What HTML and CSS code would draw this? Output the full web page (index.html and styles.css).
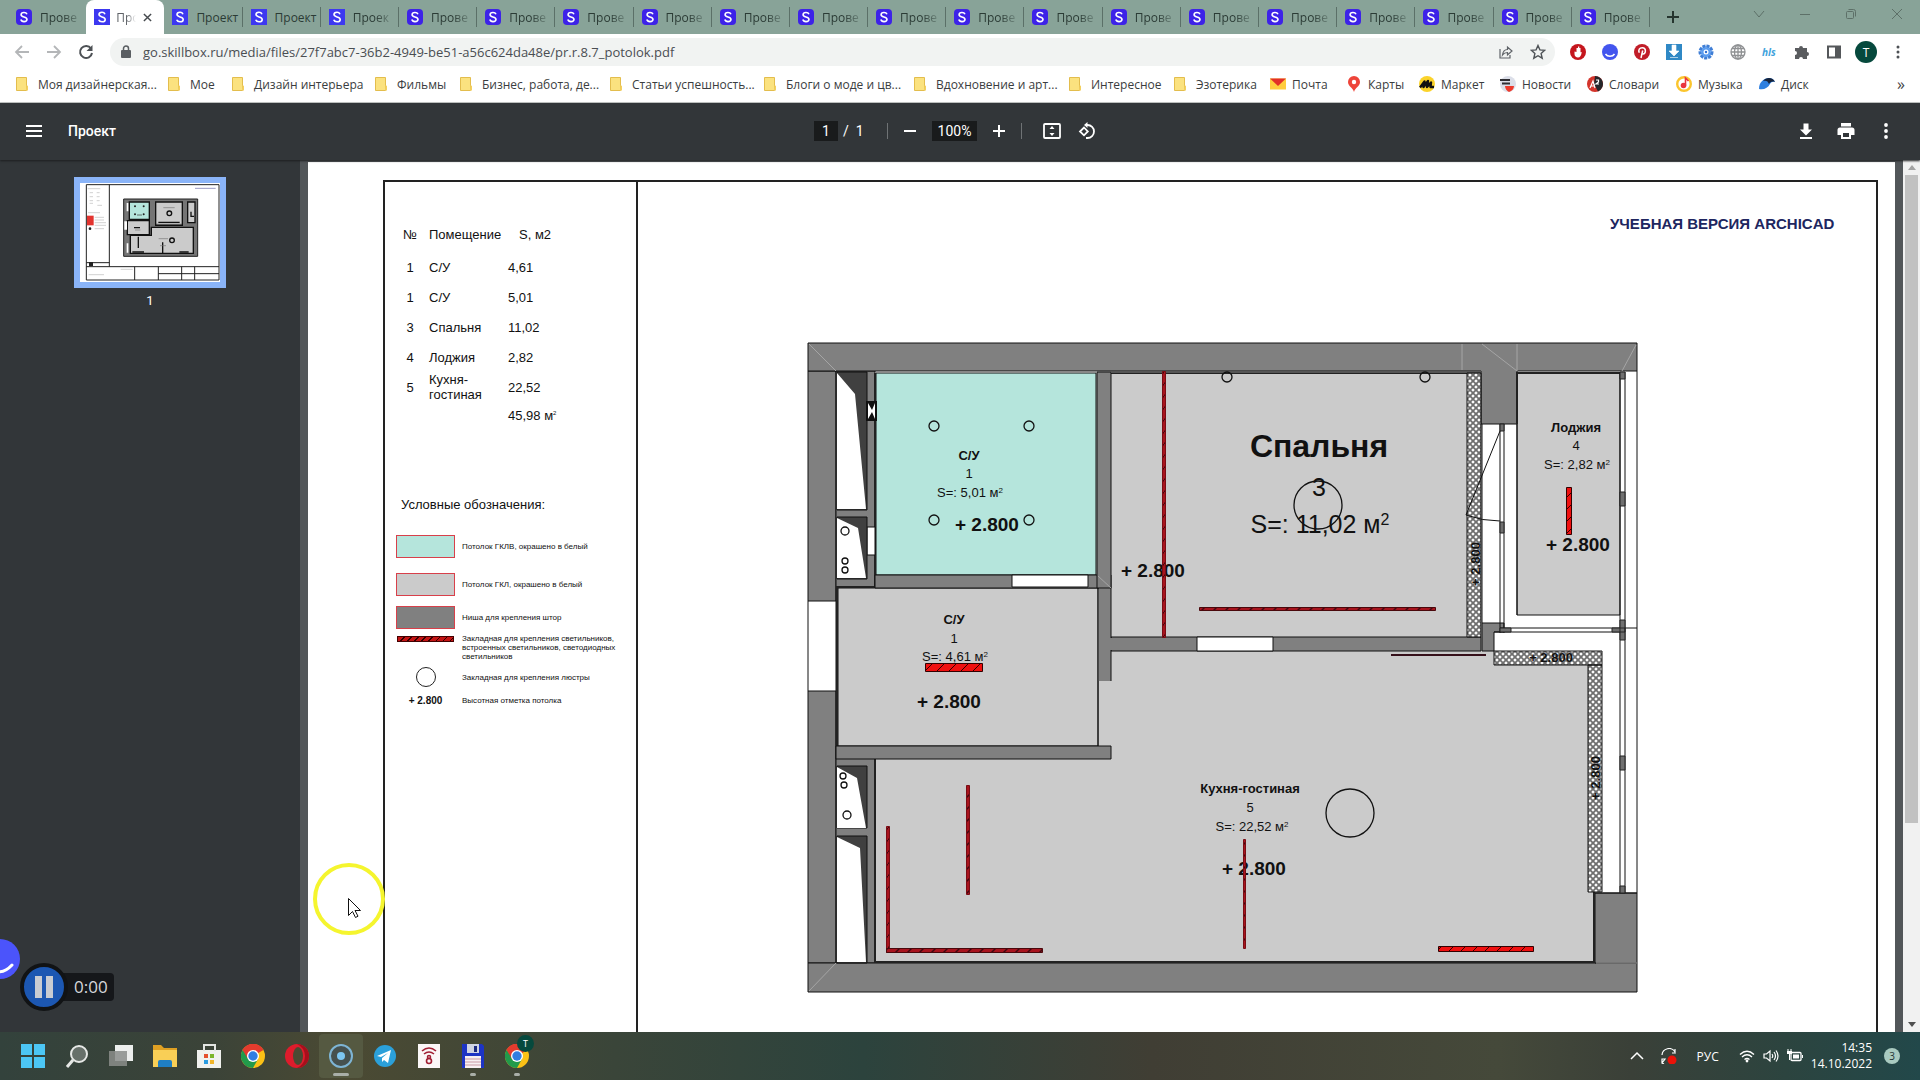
FILE: index.html
```html
<!DOCTYPE html>
<html lang="ru">
<head>
    <meta charset="UTF-8">
    <meta name="viewport" content="width=device-width, initial-scale=1.0">
    <title>Проект</title>
    <link rel="stylesheet" href="styles.css">
</head>
<body>
    <!-- shared icons -->
    <svg class="defs" aria-hidden="true">
        <symbol id="fav" viewBox="0 0 16 16">
            <rect width="16" height="16" rx="4" fill="#3d22e8"/>
            <path d="M11 5.2C10.500 4 9.300 3.500 8 3.500c-1.700 0-2.900.9-2.900 2.200C5.100 8.600 11 7.200 11 10.300c0 1.400-1.300 2.300-3 2.300-1.500 0-2.800-.7-3.200-2" fill="none" stroke="#fff" stroke-width="1.600"/>
        </symbol>
        <symbol id="fav-sq" viewBox="0 0 16 16">
            <rect width="16" height="16" fill="#3d38f0"/>
            <path d="M11 5.200C10.500 4 9.300 3.300 8 3.300c-1.700 0-3 .9-3 2.300C5 8.600 11.200 7.200 11.200 10.400c0 1.400-1.400 2.400-3.200 2.400-1.500 0-2.800-.7-3.300-2" fill="none" stroke="#fff" stroke-width="1.600"/>
        </symbol>
        <symbol id="folder" viewBox="0 0 16 16">
            <path d="M0.500 1.500h10v13h-10z" fill="#fbe27f" stroke="#e3bd4d"/>
            <path d="M10.500 9l1.500 1v4.500h-2z" fill="#f3d060"/>
        </symbol>
        <symbol id="chrome" viewBox="0 0 24 24">
            <circle cx="12" cy="12" r="12" fill="#fbc116"/>
            <path d="M12 12L1.600 6A12 12 0 0 1 22.400 6z" fill="#e33b2e"/>
            <path d="M12 12L1.600 6A12 12 0 0 0 12 24l5-9z" fill="#229a4b"/>
            <path d="M12 6h10.400A12 12 0 0 0 1.600 6L7 15z" fill="#e33b2e"/>
            <circle cx="12" cy="12" r="6" fill="#fff"/>
            <circle cx="12" cy="12" r="4.700" fill="#2f7de1"/>
        </symbol>
    </svg>

    <header class="browser">
        <div class="tabstrip">
            <nav class="tabs">
                <button class="tab"><svg><use href="#fav"/></svg><span>Прове</span></button>
                <button class="tab active"><svg><use href="#fav-sq"/></svg><span>Про</span><svg class="close" viewBox="0 0 10 10"><path d="M1 1l8 8M9 1l-8 8" stroke="#45494d" stroke-width="1.600"/></svg></button>
                <button class="tab full"><svg><use href="#fav-sq"/></svg><span>Проект</span></button>
                <button class="tab full"><svg><use href="#fav-sq"/></svg><span>Проект</span></button>
                <button class="tab"><svg><use href="#fav-sq"/></svg><span>Проек</span></button>
                <button class="tab"><svg><use href="#fav"/></svg><span>Прове</span></button>
                <button class="tab"><svg><use href="#fav"/></svg><span>Прове</span></button>
                <button class="tab"><svg><use href="#fav"/></svg><span>Прове</span></button>
                <button class="tab"><svg><use href="#fav"/></svg><span>Прове</span></button>
                <button class="tab"><svg><use href="#fav"/></svg><span>Прове</span></button>
                <button class="tab"><svg><use href="#fav"/></svg><span>Прове</span></button>
                <button class="tab"><svg><use href="#fav"/></svg><span>Прове</span></button>
                <button class="tab"><svg><use href="#fav"/></svg><span>Прове</span></button>
                <button class="tab"><svg><use href="#fav"/></svg><span>Прове</span></button>
                <button class="tab"><svg><use href="#fav"/></svg><span>Прове</span></button>
                <button class="tab"><svg><use href="#fav"/></svg><span>Прове</span></button>
                <button class="tab"><svg><use href="#fav"/></svg><span>Прове</span></button>
                <button class="tab"><svg><use href="#fav"/></svg><span>Прове</span></button>
                <button class="tab"><svg><use href="#fav"/></svg><span>Прове</span></button>
                <button class="tab"><svg><use href="#fav"/></svg><span>Прове</span></button>
                <button class="tab"><svg><use href="#fav"/></svg><span>Прове</span></button>
            </nav>
            <button class="new-tab" aria-label="Новая вкладка"><svg viewBox="0 0 12 12"><path d="M6 0v12M0 6h12" stroke="#26352f" stroke-width="2"/></svg></button>
            <div class="window-buttons">
                <button aria-label="Поиск вкладок"><svg viewBox="0 0 12 12"><path d="M1 3l5 6 5-6" fill="none" stroke="#5d7068"/></svg></button>
                <button aria-label="Свернуть"><svg viewBox="0 0 12 12"><path d="M1 6.500h10" stroke="#5d7068"/></svg></button>
                <button aria-label="Развернуть"><svg viewBox="0 0 12 12"><rect x="1.500" y="3.500" width="7" height="7" rx="1" fill="none" stroke="#5d7068"/><path d="M3.500 1.500h5a2 2 0 0 1 2 2v5" fill="none" stroke="#5d7068"/></svg></button>
                <button aria-label="Закрыть"><svg viewBox="0 0 12 12"><path d="M1 1l10 10M11 1L1 11" stroke="#5d7068"/></svg></button>
            </div>
        </div>

        <div class="address-row">
            <div class="nav-buttons">
                <button aria-label="Назад"><svg viewBox="0 0 16 16"><path d="M15 8H2M8 2L2 8l6 6" fill="none" stroke="#b4b6b8" stroke-width="1.800"/></svg></button>
                <button aria-label="Вперёд"><svg viewBox="0 0 16 16"><path d="M1 8h13M8 2l6 6-6 6" fill="none" stroke="#b4b6b8" stroke-width="1.800"/></svg></button>
                <button aria-label="Обновить"><svg viewBox="0 0 16 16"><path d="M13 4.500A6 6 0 1 0 14 9" fill="none" stroke="#4d5155" stroke-width="2"/><path d="M14.500 1v6h-6z" fill="#4d5155"/></svg></button>
            </div>
            <label class="omnibox">
                <svg class="lock" viewBox="0 0 10 14"><rect y="5" width="10" height="8" rx="1" fill="#5a5e62"/><path d="M2.500 6V3.500a2.500 2.500 0 0 1 5 0V6" fill="none" stroke="#5a5e62" stroke-width="1.500"/></svg>
                <input type="text" aria-label="Адрес" value="go.skillbox.ru/media/files/27f7abc7-36b2-4949-be51-a56c624da48e/pr.r.8.7_potolok.pdf">
                <svg viewBox="0 0 16 16"><path d="M2 5v9h10v-3M4.500 11c.5-4 2.500-5.500 5-5.500V3L14 7l-4.500 4V8.500c-2 0-3.500.5-5 2.500z" fill="none" stroke="#5f6368" stroke-width="1.200"/></svg>
                <svg viewBox="0 0 16 16"><path d="M8 1.500l1.900 4.400 4.800.4-3.600 3.200 1.100 4.700L8 11.700l-4.200 2.500 1.100-4.700L1.300 6.300l4.800-.4z" fill="none" stroke="#4f5357" stroke-width="1.400"/></svg>
            </label>
            <div class="extensions">
                <svg viewBox="0 0 16 16"><circle cx="8" cy="8" r="8" fill="#c5161d"/><path d="M4.500 7.500V10c0 2.300 1.500 3.500 3.500 3.500s3.500-2 3.700-5.500l-1.200.3V4H9.300V2.500H8V4H6.500v4z" fill="#fff"/></svg>
                <svg viewBox="0 0 16 16"><circle cx="8" cy="8" r="8" fill="#4355ee"/><path d="M3.500 10c2 3 7 3 9 0" fill="none" stroke="#fff" stroke-width="1.500"/></svg>
                <svg viewBox="0 0 16 16"><circle cx="8" cy="8" r="8" fill="#c11d28"/><path d="M7 14l1.700-7.500M5.300 8.800C4 6 5.500 3.700 8.300 3.700c4.300 0 3.700 6.300.8 6.300-1 0-1.500-.8-1.500-.8" fill="none" stroke="#fff" stroke-width="1.500"/></svg>
                <svg viewBox="0 0 16 16"><rect width="16" height="16" fill="#2f88c5"/><path d="M6 1h4v6h3l-5 5-5-5h3zM4 13.500h8" fill="#fff" stroke="#fff" stroke-width=".6"/></svg>
                <svg viewBox="0 0 16 16"><circle cx="8" cy="8" r="6" fill="#8dbdf5" stroke="#3f7ed6" stroke-width="3" stroke-dasharray="3 1"/><circle cx="8" cy="8" r="4.500" fill="#5a9cf0"/><circle cx="8" cy="8" r="2.500" fill="#fff"/><circle cx="8" cy="8" r="1.200" fill="#2f6ed0"/></svg>
                <svg viewBox="0 0 16 16" fill="none" stroke="#8f9193" stroke-width="1.300"><circle cx="8" cy="8" r="7"/><ellipse cx="8" cy="8" rx="3.500" ry="7"/><path d="M8 1v14M1 8h14M2 4.500h12M2 11.500h12"/></svg>
                <span class="hls">hls</span>
                <svg viewBox="0 0 16 16"><path d="M1 4h4a2 2 0 1 1 4 0h4v4a2 2 0 1 1 0 4v3H9a2 2 0 0 0-4 0H1v-4a2 2 0 0 0 0-4z" fill="#5a5c5f"/></svg>
                <svg viewBox="0 0 16 16"><path d="M1 1.500h14v13H1z" fill="#54575a"/><path d="M3 3.500h6v9H3z" fill="#fff"/></svg>
                <button class="avatar">T</button>
                <svg viewBox="0 0 16 16" fill="#4d5155"><circle cx="8" cy="3" r="1.500"/><circle cx="8" cy="8" r="1.500"/><circle cx="8" cy="13" r="1.500"/></svg>
            </div>
        </div>

        <nav class="bookmarks">
            <a href="#"><svg><use href="#folder"/></svg>Моя дизайнерская...</a>
            <a href="#"><svg><use href="#folder"/></svg>Мое</a>
            <a href="#"><svg><use href="#folder"/></svg>Дизайн интерьера</a>
            <a href="#"><svg><use href="#folder"/></svg>Фильмы</a>
            <a href="#"><svg><use href="#folder"/></svg>Бизнес, работа, де...</a>
            <a href="#"><svg><use href="#folder"/></svg>Статьи успешность...</a>
            <a href="#"><svg><use href="#folder"/></svg>Блоги о моде и цв...</a>
            <a href="#"><svg><use href="#folder"/></svg>Вдохновение и арт...</a>
            <a href="#"><svg><use href="#folder"/></svg>Интересное</a>
            <a href="#"><svg><use href="#folder"/></svg>Эзотерика</a>
            <a href="#"><svg viewBox="0 0 16 16"><path d="M0 2.500h16v11H0z" fill="#ffcc3d"/><path d="M0 2.500h16L8 10z" fill="#e22f28"/></svg>Почта</a>
            <a href="#"><svg viewBox="0 0 16 16"><path d="M8 16C7 11.500 2 10.500 2 6a6 6 0 0 1 12 0c0 4.500-5 5.500-6 10z" fill="#ee4439"/><circle cx="8" cy="6" r="2.200" fill="#fff"/></svg>Карты</a>
            <a href="#"><svg viewBox="0 0 16 16"><circle cx="8" cy="8" r="8" fill="#fbd32a"/><path d="M1 11.500l4.500-6-1 5.500 4.500-6-1 6 4-4.500-.5 4.500H15" fill="none" stroke="#111" stroke-width="2.400" stroke-linejoin="round"/></svg>Маркет</a>
            <a href="#"><svg viewBox="0 0 16 16"><circle cx="8" cy="8" r="8" fill="#dcdfe9"/><path d="M5 10h9c0 3-2 5-5 6-2-1-4-3-4-6z" fill="#ed3b2d"/><path d="M0 4h10M2 7.500h8" stroke="#2f2d33" stroke-width="1.800"/></svg>Новости</a>
            <a href="#"><svg viewBox="0 0 16 16"><circle cx="8" cy="8" r="8" fill="#d4342b"/><path d="M8 0a8 8 0 0 1 3 15.400L7 8z" fill="#25262b"/><path d="M3 12l3-7 2 7M4 10h3M9 4h2.500v2L9 8h3" fill="none" stroke="#fff" stroke-width="1.200"/></svg>Словари</a>
            <a href="#"><svg viewBox="0 0 16 16"><circle cx="8" cy="8" r="6.800" fill="#fff" stroke="#fbc52d" stroke-width="2.400"/><circle cx="7.500" cy="9.500" r="2.800" fill="#e9353f"/><path d="M9.500 9.500V2l3 3" fill="none" stroke="#e9353f" stroke-width="1.600"/></svg>Музыка</a>
            <a href="#"><svg viewBox="0 0 16 16"><path d="M0 13C0 6 5 2 10 2c3 0 5 1.500 6 4-2-.8-4 0-5 2-2 4-6 6-11 5z" fill="#2d7fe0"/><path d="M4 5c3-4 10-4 12 1-3-1-5 0-6 2-1-3-3-4-6-3z" fill="#16233a"/></svg>Диск</a>
            <button class="more" aria-label="Другие закладки">»</button>
        </nav>
    </header>

    <div class="pdf-bar">
        <div class="pdf-left">
            <button aria-label="Меню"><svg viewBox="0 0 18 18"><path d="M1 4h16M1 9h16M1 14h16" stroke="#fff" stroke-width="2"/></svg></button>
            <span class="pdf-title">Проект</span>
        </div>
        <div class="pdf-center">
            <input class="page-no" type="text" aria-label="Страница" value="1">
            <span class="page-total">/&nbsp; 1</span>
            <i class="divider"></i>
            <button aria-label="Уменьшить"><svg viewBox="0 0 18 18"><path d="M3 9h12" stroke="#fff" stroke-width="2"/></svg></button>
            <input class="zoom" type="text" aria-label="Масштаб" value="100%">
            <button aria-label="Увеличить"><svg viewBox="0 0 18 18"><path d="M3 9h12M9 3v12" stroke="#fff" stroke-width="2"/></svg></button>
            <i class="divider"></i>
            <div class="fit">
                <button aria-label="По размеру страницы"><svg viewBox="0 0 18 18"><rect x="1" y="2" width="16" height="14" rx="1" fill="none" stroke="#fff" stroke-width="1.800"/><path d="M9 4l2.500 3h-5zM9 14l2.500-3h-5z" fill="#fff"/></svg></button>
                <button aria-label="Повернуть"><svg viewBox="0 0 18 18"><path d="M6 5.500l3.800 4L6 13.300l-4-3.800zM8 3h1.500a6.500 6.500 0 0 1 0 13H8" fill="none" stroke="#fff" stroke-width="1.800"/><path d="M9.500 0v6L6 3z" fill="#fff"/></svg></button>
            </div>
        </div>
        <div class="pdf-right">
            <button aria-label="Скачать"><svg viewBox="0 0 18 18"><path d="M6.500 1.500h5v6H15l-6 6-6-6h3.500zM3 15h12v2H3z" fill="#fff"/></svg></button>
            <button aria-label="Печать"><svg viewBox="0 0 18 18"><path d="M4 1h10v3.500H4zM3 5.500h12a2.500 2.500 0 0 1 2.500 2.500v5H14v4H4v-4H.5V8A2.500 2.500 0 0 1 3 5.500zM6 11v4h6v-4z" fill="#fff" fill-rule="evenodd"/></svg></button>
            <button aria-label="Ещё"><svg viewBox="0 0 18 18" fill="#fff"><circle cx="9" cy="3" r="1.900"/><circle cx="9" cy="9" r="1.900"/><circle cx="9" cy="15" r="1.900"/></svg></button>
        </div>
    </div>

    <main class="viewer">
        <aside class="sidebar">
            <button class="thumb" aria-label="Страница 1">
                <svg viewBox="240 99 420 297">
                    <path d="M240 99h420v297H240z" fill="#fff"/>
                    <g fill="none" stroke="#222" stroke-width="3">
                        <path d="M259 104h398v286H259zM328 104v246M259 338h69M259 350h398M404 350v40M475 350v40M475 371h182M545 350v40M584 350v40"/>
                    </g>
                    <path d="M371 147h222v172H371z" fill="#757575" stroke="#222" stroke-width="3"/>
                    <path d="M388 156h60v52h-60z" fill="#b5e5dc"/>
                    <path d="M467 156h80v65h-80zM563 156h22v62h-22zM382 212h66v42h-66zM454 232h126v78H391v-54h63z" fill="#cbcbcb"/>
                    <path d="M388 156h60v52h-60zM467 156h80v70h-80zM563 156h22v62h-22zM382 212h66v42h-66zM391 310h189v-78H454v24h-63z" fill="none" stroke="#111" stroke-width="4"/>
                    <path d="M373 214h8v25h-8zM380 159h5v25h-5zM380 280h5v28h-5z" fill="#fff"/>
                    <path d="M415 260v34M488 277v32M402 233h18M475 217h64M397 306h35M538 306h28M573 185v14h9" fill="none" stroke="#111" stroke-width="4"/>
                    <path d="M411 195h15" stroke="#333" stroke-width="2"/>
                    <circle cx="508" cy="190" r="7" fill="none" stroke="#111" stroke-width="4"/><circle cx="516" cy="271" r="7" fill="none" stroke="#111" stroke-width="4"/>
                    <g fill="#222"><circle cx="405" cy="169" r="3"/><circle cx="431" cy="169" r="3"/><circle cx="405" cy="193" r="3"/><circle cx="431" cy="193" r="3"/><circle cx="270" cy="236" r="4"/><path d="M267 336h12v12h-12z"/></g>
                    <path d="M261 197h20v29h-20z" fill="#e3342f"/>
                    <path d="M263 116h38M269 128h10M290 128h9M269 140h10M290 140h9M269 152h10M290 152h9M269 160h10M292 166h14M264 188h36M284 202h28M284 210h28M284 218h34M284 226h34M284 236h28M362 358h36M266 374h46" stroke="#bbb" stroke-width="2"/>
                    <path d="M585 115h62" stroke="#9a9ac4" stroke-width="3"/>
                    <path d="M476 266h28M480 287h18M490 173h34M405 240h16" stroke="#777" stroke-width="2"/>
                </svg>
            </button>
            <span class="thumb-label">1</span>
        </aside>

        <div class="canvas">
            <article class="sheet">
                <div class="frame">
                    <section class="notes">
                        <table class="rooms">
                            <thead>
                                <tr><th>№</th><th>Помещение</th><th>S, м2</th></tr>
                            </thead>
                            <tbody>
                                <tr><td>1</td><td>С/У</td><td>4,61</td></tr>
                                <tr><td>1</td><td>С/У</td><td>5,01</td></tr>
                                <tr><td>3</td><td>Спальня</td><td>11,02</td></tr>
                                <tr><td>4</td><td>Лоджия</td><td>2,82</td></tr>
                                <tr><td>5</td><td>Кухня-гостиная</td><td>22,52</td></tr>
                            </tbody>
                            <tfoot>
                                <tr><td></td><td></td><td>45,98 м<sup>2</sup></td></tr>
                            </tfoot>
                        </table>
                        <h2>Условные обозначения:</h2>
                        <dl class="legend">
                            <dt><i class="swatch mint"></i></dt><dd>Потолок ГКЛВ, окрашено в белый</dd>
                            <dt><i class="swatch light"></i></dt><dd>Потолок ГКЛ, окрашено в белый</dd>
                            <dt><i class="swatch dark"></i></dt><dd>Ниша для крепления штор</dd>
                            <dt class="top"><i class="swatch strip"></i></dt><dd class="top">Закладная для крепления светильников, встроенных светильников, светодиодных светильников</dd>
                            <dt><i class="swatch ring"></i></dt><dd>Закладная для крепления люстры</dd>
                            <dt class="mark">+ 2.800</dt><dd>Высотная отметка потолка</dd>
                        </dl>
                    </section>

                    <svg class="plan" viewBox="638 182 1238 850">
                        <defs>
                            <pattern id="red" width="12" height="12" patternUnits="userSpaceOnUse">
                                <path d="M0 0h12v12H0z" fill="#f01010"/>
                                <path d="M-1 13L13-1" stroke="#300" stroke-width="1"/>
                            </pattern>
                            <pattern id="darkred" width="12" height="12" patternUnits="userSpaceOnUse">
                                <path d="M0 0h12v12H0z" fill="#a8141e"/>
                                <path d="M-1 13L13-1" stroke="#400810" stroke-width="1.500"/>
                            </pattern>
                            <pattern id="cross" width="6" height="6" patternUnits="userSpaceOnUse">
                                <path d="M0 0h6v6H0z" fill="#fff"/>
                                <path d="M0 0l6 6M6 0L0 6" stroke="#6f6f6f" stroke-width="1.800"/>
                            </pattern>
                        </defs>

                        <text class="stamp" x="1610" y="229">УЧЕБНАЯ ВЕРСИЯ ARCHICAD</text>

                        <!-- outer walls -->
                        <g class="wall">
                            <path d="M808 371h28v230h-28zM808 691h28v272h-28z"/>
                            <path d="M836 371h39v592h-39z"/>
                            <path d="M808 343h829v28h-120v53h-36v-53H808z"/>
                            <path d="M808 963h829v29H808z"/>
                            <path d="M1595 893h42v70h-42z"/>
                        </g>
                        <path class="line" d="M808 601v90M1637 371v522"/>

                        <!-- rooms -->
                        <path class="room" d="M1097 651h504v240h-8v70H876V759h221z"/>
                        <path class="room edge" d="M838 588h260v158H838z"/>
                        <path class="room" d="M1111 373h356v264h-356z"/>
                        <path class="room edge" d="M1517 373h103v242h-103z"/>
                        <path class="mint-room" d="M876 373h220v202H876z"/>
                        <path class="thick" d="M875 373v214H837v159M875 759v203h719v-71M1111 373h370M1517 424v-51h103"/>

                        <!-- partitions -->
                        <g class="wall">
                            <path d="M875 575h236v13H875z"/>
                            <path d="M1097 372h14v216h-14z"/>
                            <path d="M836 746h275v13H836z"/>
                            <path d="M1111 637h370v14h-370z"/>
                            <path d="M1482 623h22v9h-10v19h-12z"/>
                        </g>
                        <path d="M1098 589h13v92h-13z" fill="#808080"/>
                        <path d="M1105 638h12v12h-12z" fill="#808080"/>
                        <path class="line" d="M1098 588v158M1111 588v50M1111 650v31"/>
                        <path class="hole" d="M1012 575h76v12h-76zM1197 637h76v14h-76zM867 527h8v28h-8z"/>
                        <path d="M1111 372h370" stroke="#555" stroke-width="2"/>

                        <!-- ventilation shafts -->
                        <g class="shaft">
                            <path d="M837 372h30v138h-30zM837 517h30v62h-30zM837 766h30v62h-30zM837 836h30v127h-30z"/>
                        </g>
                        <path d="M837 373l18 21 11 115h-29zM837 518l21 10 8 50h-29zM837 767l20 11 9 50h-29zM837 837l23 11 6 114h-29z" fill="#fff"/>
                        <g class="ring">
                            <circle cx="845" cy="531" r="4"/><circle cx="845" cy="561" r="3"/><circle cx="845" cy="570" r="3"/>
                            <circle cx="843" cy="776" r="3"/><circle cx="844" cy="785" r="3"/><circle cx="847" cy="815" r="4"/>
                        </g>
                        <path d="M866 401h11v20h-11z" fill="#111"/>
                        <path d="M868 403l4 7 3-7v16l-3-7-4 7z" fill="#fff"/>

                        <!-- windows and balcony -->
                        <path class="line" d="M1482 424v199M1500 424v209M1504 424v209M1517 424v191"/>
                        <path class="line" d="M1620 372v521M1625 372v521M1500 628h137M1494 632h126M1595 893h42"/>
                        <g class="stub">
                            <path d="M1500 424h4v7h-4zM1500 522h4v11h-4zM1620 372h5v7h-5zM1620 492h5v14h-5zM1620 620h5v20h-5zM1620 756h5v14h-5zM1620 886h5v7h-5zM1500 628h11v4h-11zM1612 628h13v4h-13z"/>
                        </g>
                        <path class="niche" d="M1467 373h14v264h-14zM1494 651h108v14h-108zM1588 665h14v227h-14z"/>
                        <path class="line" d="M1500 431l-34 84q16 6 34 6"/>

                        <!-- wall joints -->
                        <path d="M809 344l27 27M809 991l27-28M1462 344v26M1482 344l35 27M1517 344v27M1636 345l-14 26M1596 963h41M1098 576l13 12" stroke="#a5a5a5" fill="none"/>

                        <!-- chandeliers and spots -->
                        <g class="ring">
                            <circle cx="934" cy="426" r="5"/><circle cx="1029" cy="426" r="5"/>
                            <circle cx="934" cy="520" r="5"/><circle cx="1029" cy="520" r="5"/>
                            <circle cx="1227" cy="377" r="5"/><circle cx="1425" cy="377" r="5"/>
                            <circle cx="1318" cy="505" r="24"/><circle cx="1350" cy="813" r="24"/>
                        </g>

                        <g class="name">
                            <text x="969" y="460">С/У</text>
                            <text x="954" y="624">С/У</text>
                            <text x="1576" y="432">Лоджия</text>
                            <text x="1250" y="793">Кухня-гостиная</text>
                        </g>
                        <g class="area">
                            <text x="969" y="478">1</text>
                            <text x="954" y="643">1</text>
                            <text x="1576" y="450">4</text>
                            <text x="1250" y="812">5</text>
                            <text x="970" y="497">S=: 5,01 м<tspan class="sup" dy="-4">2</tspan></text>
                            <text x="955" y="661">S=: 4,61 м<tspan class="sup" dy="-4">2</tspan></text>
                            <text x="1577" y="469">S=: 2,82 м<tspan class="sup" dy="-4">2</tspan></text>
                            <text x="1252" y="831">S=: 22,52 м<tspan class="sup" dy="-4">2</tspan></text>
                        </g>
                        <text class="big-name" x="1319" y="457">Спальня</text>
                        <g class="big-area">
                            <text x="1319" y="496">3</text>
                            <text x="1320" y="533">S=: 11,02 м<tspan class="big-sup" dy="-8">2</tspan></text>
                        </g>
                        <g class="level">
                            <text x="955" y="531">+ 2.800</text>
                            <text x="917" y="708">+ 2.800</text>
                            <text x="1121" y="577">+ 2.800</text>
                            <text x="1546" y="551">+ 2.800</text>
                            <text x="1222" y="875">+ 2.800</text>
                        </g>
                        <g class="level-small">
                            <text x="1551" y="662">+ 2.800</text>
                            <text transform="translate(1480 564) rotate(-90)">+ 2.800</text>
                            <text transform="translate(1600 778) rotate(-90)">+ 2.800</text>
                        </g>

                        <!-- lamp mounts -->
                        <g stroke="#300" fill="url(#red)">
                            <path d="M925.500 663.500h57v8h-57zM1566.500 487.500h5v47h-5zM1438.500 946.500h95v5h-95z"/>
                        </g>
                        <g stroke="#7a0c14" fill="url(#darkred)">
                            <path d="M1162.500 371.500h3v266h-3zM966.500 785.500h3v109h-3zM886.500 826.500h3v126h-3zM1243.500 839.500h2v109h-2z"/>
                            <path d="M1199.500 607.500h236v3h-236zM886.500 948.500h156v4h-156z" stroke="#4a080c"/>
                        </g>
                        <path d="M1391 655h95" stroke="#35101a" stroke-width="2"/>
                    </svg>
                </div>
            </article>
            <div class="scrollbar">
                <svg viewBox="0 0 17 15"><path d="M5 10l4-5 4 5z" fill="#a3a3a3"/></svg>
                <i class="bar"></i>
                <i class="rest"></i>
                <svg viewBox="0 0 17 15"><path d="M5 5l4 5 4-5z" fill="#4f4f4f"/></svg>
            </div>
        </div>

        <!-- screen recorder widgets -->
        <div class="bubble"><svg viewBox="0 0 40 40"><circle cx="20" cy="20" r="20" fill="#4b54fb"/><path d="M8 27q12 12 24-1" fill="none" stroke="#fff" stroke-width="3" stroke-linecap="round"/></svg></div>
        <div class="recorder">
            <button aria-label="Пауза"><svg viewBox="0 0 48 48"><circle cx="24" cy="24" r="22" fill="#1c57b2" stroke="#111315" stroke-width="4"/><path d="M15 13h7v22h-7zM26 13h7v22h-7z" fill="#c9ccd2"/></svg></button>
            <span>0:00</span>
        </div>
        <svg class="pointer" viewBox="0 0 74 74"><circle cx="37" cy="37" r="34" fill="none" stroke="#f5f52e" stroke-width="4"/><path d="M36.500 36.500v17l4-4 3 6 2.500-1.300-3-5.700h5.500z" fill="#fff" stroke="#111"/></svg>
    </main>

    <footer class="taskbar">
        <div class="apps">
            <button aria-label="Пуск"><svg viewBox="0 0 24 24" fill="#4cc6f5"><path d="M0 0h11v11H0zM13 0h11v11H13zM0 13h11v11H0zM13 13h11v11H13z"/></svg></button>
            <button aria-label="Поиск"><svg viewBox="0 0 24 24"><circle cx="14" cy="10" r="8" fill="#67706a" stroke="#e6e8e6" stroke-width="2"/><path d="M8 16l-6 7" stroke="#e6e8e6" stroke-width="3"/></svg></button>
            <button aria-label="Представление задач"><svg viewBox="0 0 24 24"><path d="M6 1h18v16H6z" fill="#eceeed"/><path d="M0 7h18v15H0z" fill="#8b8d8b" opacity=".85"/></svg></button>
            <button aria-label="Проводник"><svg viewBox="0 0 24 24"><path d="M0 1h8l3 3h13v19H0z" fill="#dfa023"/><path d="M0 6h24v17H0z" fill="#f9cf56"/><path d="M5 23v-5q0-2 2-2h10q2 0 2 2v5z" fill="#1f7fc4"/></svg></button>
            <button aria-label="Магазин"><svg viewBox="0 0 24 24"><path d="M0 6h24v18H0z" fill="#f0f1ee"/><path d="M7 7V1h11v6" fill="none" stroke="#e2e4e1" stroke-width="2"/><path d="M7 10h4v4H7z" fill="#e5502e"/><path d="M13 10h4v4h-4z" fill="#7cb52a"/><path d="M7 16h4v4H7z" fill="#2a9be0"/><path d="M13 16h4v4h-4z" fill="#f0b52a"/></svg></button>
            <button aria-label="Chrome"><svg viewBox="0 0 24 24"><use href="#chrome"/></svg></button>
            <button aria-label="Opera"><svg viewBox="0 0 24 24"><circle cx="12" cy="12" r="12" fill="#de1c2c"/><path d="M12 0a12 12 0 0 1 0 24q8-4 8-12t-8-12z" fill="#a70f1c"/><ellipse cx="13" cy="12" rx="5" ry="9" fill="#4a4a33"/></svg></button>
            <button class="current" aria-label="Запись экрана"><svg viewBox="0 0 24 24"><circle cx="12" cy="12" r="11" fill="#46514f" stroke="#7eb5d5" stroke-width="2"/><circle cx="12" cy="12" r="4" fill="#7cc6f2"/></svg></button>
            <button aria-label="Telegram"><svg viewBox="0 0 24 24"><circle cx="12" cy="12" r="11" fill="#2ba0da"/><path d="M4 12l14-6-3 13-4-3-2 2v-4l6-5-7 4z" fill="#fff"/></svg></button>
            <button aria-label="Запись"><svg viewBox="0 0 24 24"><path d="M1 0h22v24H1z" fill="#fbf7f7"/><g fill="none" stroke="#a11f33" stroke-width="1.600"><path d="M5 7q7-6 14 0M7 10q5-4 10 0"/><circle cx="12" cy="17" r="2.500"/><circle cx="12" cy="13" r="1.500"/></g></svg></button>
            <button class="open" aria-label="Total Commander"><svg viewBox="0 0 24 24"><path d="M1 0h20l2 2v22H1z" fill="#1d34c4"/><path d="M6 0h12v9H6z" fill="#cfd3e2"/><path d="M13 2h3v6h-3z" fill="#1b2a80"/><path d="M4 12h16v12H4z" fill="#f7f0f1"/><path d="M4 15h16M4 18h16M4 21h16" stroke="#c99aa4"/></svg></button>
            <button class="open" aria-label="Chrome, профиль T"><svg viewBox="0 0 24 24"><use href="#chrome"/></svg><b class="profile">T</b></button>
        </div>
        <div class="tray">
            <svg viewBox="0 0 16 16"><path d="M2 11l6-6 6 6" fill="none" stroke="#fff" stroke-width="1.500"/></svg>
            <svg viewBox="0 0 16 16"><path d="M1 7a7 7 0 0 1 13-3V1M14 5h-3M1 15v-4h3l-3 4 2 1" fill="none" stroke="#fff" stroke-width="1.200"/><circle cx="11" cy="12" r="4.500" fill="#ea1208"/></svg>
            <span class="lang">РУС</span>
            <div class="status">
                <svg viewBox="0 0 16 16"><path d="M1 6.500q7-6.500 14 0M3 9q5-4.500 10 0M5.500 11.500q2.500-2 5 0" fill="none" stroke="#fff" stroke-width="1.400"/><circle cx="8" cy="13" r="1.400" fill="#fff"/></svg>
                <svg viewBox="0 0 16 16"><path d="M1 6h2.500L7 3v10l-3.500-3H1zM9 6q1.500 2 0 4M11 4q3 4 0 8M13 2.500q4 5.500 0 11" fill="none" stroke="#fff" stroke-width="1.200"/></svg>
                <svg viewBox="0 0 16 16"><rect x="4" y="4.500" width="10" height="8" rx="1" fill="none" stroke="#fff" stroke-width="1.300"/><path d="M6 6.500h6v4H6zM15 7h1v3h-1zM0 3h5v3H3v6H2V6H0z" fill="#fff"/><path d="M1 1v2M4 1v2" stroke="#fff"/></svg>
            </div>
            <div class="clock"><time>14:35</time><time>14.10.2022</time></div>
            <span class="badge">3</span>
        </div>
    </footer>
</body>
</html>
```

FILE: styles.css
```css
* {
    box-sizing: border-box;
}
body {
    margin: 0;
    height: 100vh;
    display: flex;
    flex-direction: column;
    overflow: hidden;
    font-family: "Open Sans", "Noto Sans", sans-serif;
    font-size: 12px;
    background: #525659;
}
button {
    border: 0;
    padding: 0;
    background: none;
    font: inherit;
    color: inherit;
    display: flex;
    align-items: center;
    justify-content: center;
}
input {
    border: 0;
    padding: 0;
    background: none;
    font: inherit;
    color: inherit;
    min-width: 0;
}
svg {
    display: block;
    flex: none;
}
.defs {
    display: none;
}

/* tab strip */
.browser {
    background: #fff;
    border-bottom: 1px solid #c9cccb;
}
.tabstrip {
    display: flex;
    height: 34px;
    padding-left: 8px;
    background: #88a398;
}
.tabs {
    flex: 1;
    display: grid;
    grid-template-columns: repeat(21, 1fr);
}
.tab {
    min-width: 0;
    padding-left: 8px;
    gap: 8px;
    justify-content: flex-start;
    color: #2b3b35;
}
.tab svg {
    width: 16px;
    height: 16px;
}
.tab span {
    flex: 1;
    min-width: 0;
    overflow: hidden;
    text-align: left;
    white-space: nowrap;
    mask-image: linear-gradient(to right, #000 50%, transparent 95%);
}
.tab:nth-child(n+3):after {
    content: "";
    width: 1px;
    height: 20px;
    margin-left: -8px;
    background: #5b7068;
}
.tab.full span {
    mask-image: none;
}
.tab.active {
    background: #fff;
    border-radius: 8px 8px 0 0;
    color: #5f6368;
    padding-right: 12px;
    gap: 6px;
}
.tab.active .close {
    width: 9px;
    height: 9px;
}
.new-tab {
    width: 46px;
}
.new-tab svg, .window-buttons svg {
    width: 12px;
    height: 12px;
}
.window-buttons {
    display: flex;
    width: 224px;
    padding: 0 0 6px 40px;
}
.window-buttons button {
    flex: 1;
}

/* address row */
.address-row {
    display: flex;
    align-items: center;
    height: 36px;
}
.nav-buttons {
    display: flex;
    gap: 16px;
    padding: 0 16px 0 14px;
}
.nav-buttons svg, .omnibox svg, .extensions svg {
    width: 16px;
    height: 16px;
}
.omnibox {
    flex: 1;
    display: flex;
    align-items: center;
    gap: 16px;
    height: 28px;
    padding: 0 9px 0 11px;
    border-radius: 14px;
    background: #f1f3f2;
    color: #4a4e52;
    font-size: 13px;
}
.omnibox .lock {
    width: 10px;
    height: 14px;
    margin-right: -4px;
}
.omnibox input {
    flex: 1;
}
.extensions {
    display: flex;
    align-items: center;
    gap: 16px;
    padding: 0 14px 0 15px;
}
.hls {
    width: 16px;
    color: #3fa3dc;
    font-size: 10px;
    font-style: italic;
    font-weight: bold;
}
.avatar {
    width: 22px;
    height: 22px;
    margin: 0 -3px;
    border-radius: 50%;
    background: #06493d;
    color: #fff;
}

/* bookmarks */
.bookmarks {
    display: grid;
    grid-template-columns: 152fr 64fr 143fr 85fr 150fr 154fr 150fr 155fr 105fr 96fr 76fr 73fr 81fr 87fr 89fr 83fr 138fr 23fr;
    align-items: center;
    height: 32px;
    padding: 0 0 4px 16px;
}
.bookmarks a {
    display: flex;
    align-items: center;
    gap: 6px;
    color: #3a3d40;
    text-decoration: none;
    white-space: nowrap;
}
.bookmarks svg {
    width: 16px;
    height: 16px;
}
.more {
    justify-content: flex-start;
    font-size: 16px;
    color: #444;
}

/* pdf toolbar */
.pdf-bar {
    display: flex;
    align-items: center;
    height: 57px;
    padding-bottom: 2px;
    background: #323639;
    color: #fff;
    font-family: Roboto, sans-serif;
    font-size: 14px;
    box-shadow: 0 1px 2px #1c1e20;
    z-index: 1;
}
.pdf-bar svg {
    width: 18px;
    height: 18px;
}
.pdf-left, .pdf-right {
    flex: 1;
    display: flex;
    align-items: center;
}
.pdf-left {
    gap: 25px;
    padding-left: 25px;
}
.pdf-title {
    font-weight: 500;
}
.pdf-center {
    display: flex;
    align-items: center;
    gap: 13px;
    padding-right: 10px;
}
.pdf-center input {
    height: 20px;
    background: #191b1c;
    text-align: center;
}
.page-no {
    width: 24px;
}
.page-total {
    width: 31px;
    margin-left: -8px;
}
.zoom {
    width: 45px;
}
.divider {
    width: 1px;
    height: 16px;
    background: #6f7375;
}
.fit {
    display: flex;
    gap: 17px;
    margin-left: 8px;
}
.pdf-right {
    justify-content: flex-end;
    gap: 22px;
    padding-right: 25px;
}

/* viewer */
.viewer {
    flex: 1;
    min-height: 0;
    display: flex;
    position: relative;
}
.sidebar {
    width: 300px;
    padding-top: 17px;
    display: flex;
    flex-direction: column;
    align-items: center;
    gap: 5px;
    background: #323639;
    color: #fff;
    font-family: Roboto, sans-serif;
    font-size: 13px;
}
.thumb {
    width: 152px;
    border: 6px solid #8ab4f8;
}
.thumb svg {
    width: 100%;
}
.canvas {
    flex: 1;
    min-width: 0;
    display: flex;
    gap: 8px;
    padding-left: 8px;
    overflow: hidden;
}
.sheet {
    flex: 1;
    margin-top: 2px;
    padding: 18px 17px 0 75px;
    background: #fff;
    font-family: "Liberation Sans", Arial, sans-serif;
    font-size: 13px;
    color: #111;
}
.frame {
    display: flex;
    border: 2px solid #222;
}
.notes {
    width: 253px;
    padding: 35px 10px 0 11px;
    border-right: 2px solid #222;
    line-height: 15px;
}
.plan {
    flex: 1;
    min-width: 0;
}
.rooms {
    width: 210px;
    margin-left: 3px;
    border-collapse: collapse;
    table-layout: fixed;
}
.rooms th, .rooms td {
    height: 30px;
    padding: 0;
    font-weight: normal;
    text-align: left;
}
.rooms th {
    height: 35px;
}
.rooms tfoot td {
    height: 26px;
}
.rooms th:first-child, .rooms td:first-child {
    width: 22px;
    text-align: center;
}
.rooms th:nth-child(2), .rooms td:nth-child(2) {
    width: 87px;
    padding: 0 16px 0 8px;
}
.rooms th:nth-child(2) {
    padding-right: 0;
}
.rooms th:last-child {
    padding-left: 11px;
}
.rooms sup {
    font-size: 6px;
    line-height: 0;
}
.notes h2 {
    margin: 69px 0 15px 5px;
    font-size: 13px;
    font-weight: normal;
}
.legend {
    display: grid;
    grid-template-columns: 59px 1fr;
    grid-template-rows: 38px 38px 28px 33px 26px 20px;
    column-gap: 7px;
    align-items: center;
    margin: 0;
    font-size: 8px;
    line-height: 9px;
}
.legend dd {
    margin: 0;
}
.legend .top {
    align-self: start;
    padding-top: 3px;
}
.swatch {
    display: block;
    height: 23px;
    border: 1px solid #d8404a;
}
.mint {
    background: #b5e5dc;
}
.light {
    background: #cbcbcb;
}
.dark {
    background: #808080;
}
.strip {
    height: 6px;
    margin: 2px 1px;
    border-color: #400;
    background: repeating-linear-gradient(135deg, #c41414 0 4px, #300 4px 5px);
}
.swatch.ring {
    width: 20px;
    height: 20px;
    margin: 0 auto;
    border-color: #222;
    border-radius: 50%;
}
.mark {
    font-size: 10px;
    font-weight: bold;
    text-align: center;
}

/* floor plan */
.wall path {
    fill: #808080;
    stroke: #111;
}
.room {
    fill: #cbcbcb;
}
.edge {
    stroke: #111;
}
.mint-room {
    fill: #b5e5dc;
    stroke: #111;
}
.line {
    fill: none;
    stroke: #111;
}
.thick {
    fill: none;
    stroke: #222;
    stroke-width: 2px;
}
.hole {
    fill: #fff;
    stroke: #111;
}
.shaft path {
    fill: #404040;
    stroke: #111;
}
.ring circle {
    fill: none;
    stroke: #111;
    stroke-width: 1.3px;
}
.stub path {
    fill: #707070;
    stroke: #222;
}
.niche {
    fill: url(#cross);
    stroke: #111;
}
.plan text {
    fill: #111;
}
.plan .stamp {
    font-size: 15px;
    font-weight: bold;
    fill: #20265f;
}
.name, .area, .big-name, .big-area, .level-small {
    text-anchor: middle;
}
.name {
    font-size: 13px;
    font-weight: bold;
}
.area {
    font-size: 13px;
}
.sup {
    font-size: 8px;
}
.big-name {
    font-size: 32px;
    font-weight: bold;
}
.big-area {
    font-size: 25px;
}
.big-sup {
    font-size: 16px;
}
.level {
    font-size: 19px;
    font-weight: bold;
}
.level-small {
    font-size: 13px;
    font-weight: bold;
}

.scrollbar {
    width: 17px;
    display: flex;
    flex-direction: column;
    background: #f1f1f1;
}
.scrollbar svg {
    width: 17px;
    height: 15px;
}
.bar {
    flex: 647;
    margin: 0 2px;
    background: #c1c1c1;
}
.rest {
    flex: 194;
}

/* things floating over the viewer */
.bubble {
    position: absolute;
    left: -20px;
    bottom: 53px;
    width: 40px;
}
.recorder {
    position: absolute;
    left: 20px;
    bottom: 21px;
    display: flex;
    align-items: center;
    color: #d6d8da;
    font-size: 17px;
}
.recorder svg {
    width: 48px;
    height: 48px;
}
.recorder span {
    margin-left: -10px;
    padding: 2px 6px 3px 16px;
    border-radius: 0 4px 4px 0;
    background: #15171a;
}
.recorder button {
    z-index: 1;
}
.pointer {
    position: absolute;
    left: 312px;
    bottom: 96px;
    width: 74px;
}

/* taskbar */
.taskbar {
    display: flex;
    justify-content: space-between;
    align-items: center;
    height: 48px;
    padding: 0 20px 0 11px;
    color: #fff;
    background: linear-gradient(to right, #33423c, #3b4338 11%, #4b4a33 18%, #3a4539 32%, #2c433d 45%, #403e34 60%, #45493a 78%, #3a4038 85%, #2c443f 93%, #22484a);
}
.apps {
    display: flex;
}
.apps button {
    width: 44px;
    height: 44px;
    position: relative;
}
.apps svg {
    width: 24px;
    height: 24px;
}
.current {
    border-radius: 4px;
    background: #555941;
}
.current:after, .open:after {
    content: "";
    position: absolute;
    bottom: 2px;
    width: 6px;
    height: 3px;
    border-radius: 2px;
    background: #a9afa8;
}
.current:after {
    width: 16px;
}
.profile {
    position: absolute;
    top: 1px;
    right: 5px;
    width: 17px;
    height: 17px;
    border-radius: 50%;
    background: #06493d;
    font-size: 9px;
    font-weight: normal;
    line-height: 17px;
}
.tray {
    display: flex;
    align-items: center;
    gap: 16px;
}
.tray svg {
    width: 16px;
    height: 16px;
}
.lang {
    margin: 0 4px;
}
.status {
    display: flex;
    gap: 8px;
    margin-right: -8px;
}
.clock {
    display: flex;
    flex-direction: column;
    align-items: flex-end;
    line-height: 16px;
}
.badge {
    width: 16px;
    height: 16px;
    margin-left: -4px;
    border-radius: 50%;
    background: #a9cac0;
    color: #233;
    font-size: 10px;
    line-height: 16px;
    text-align: center;
}
```
